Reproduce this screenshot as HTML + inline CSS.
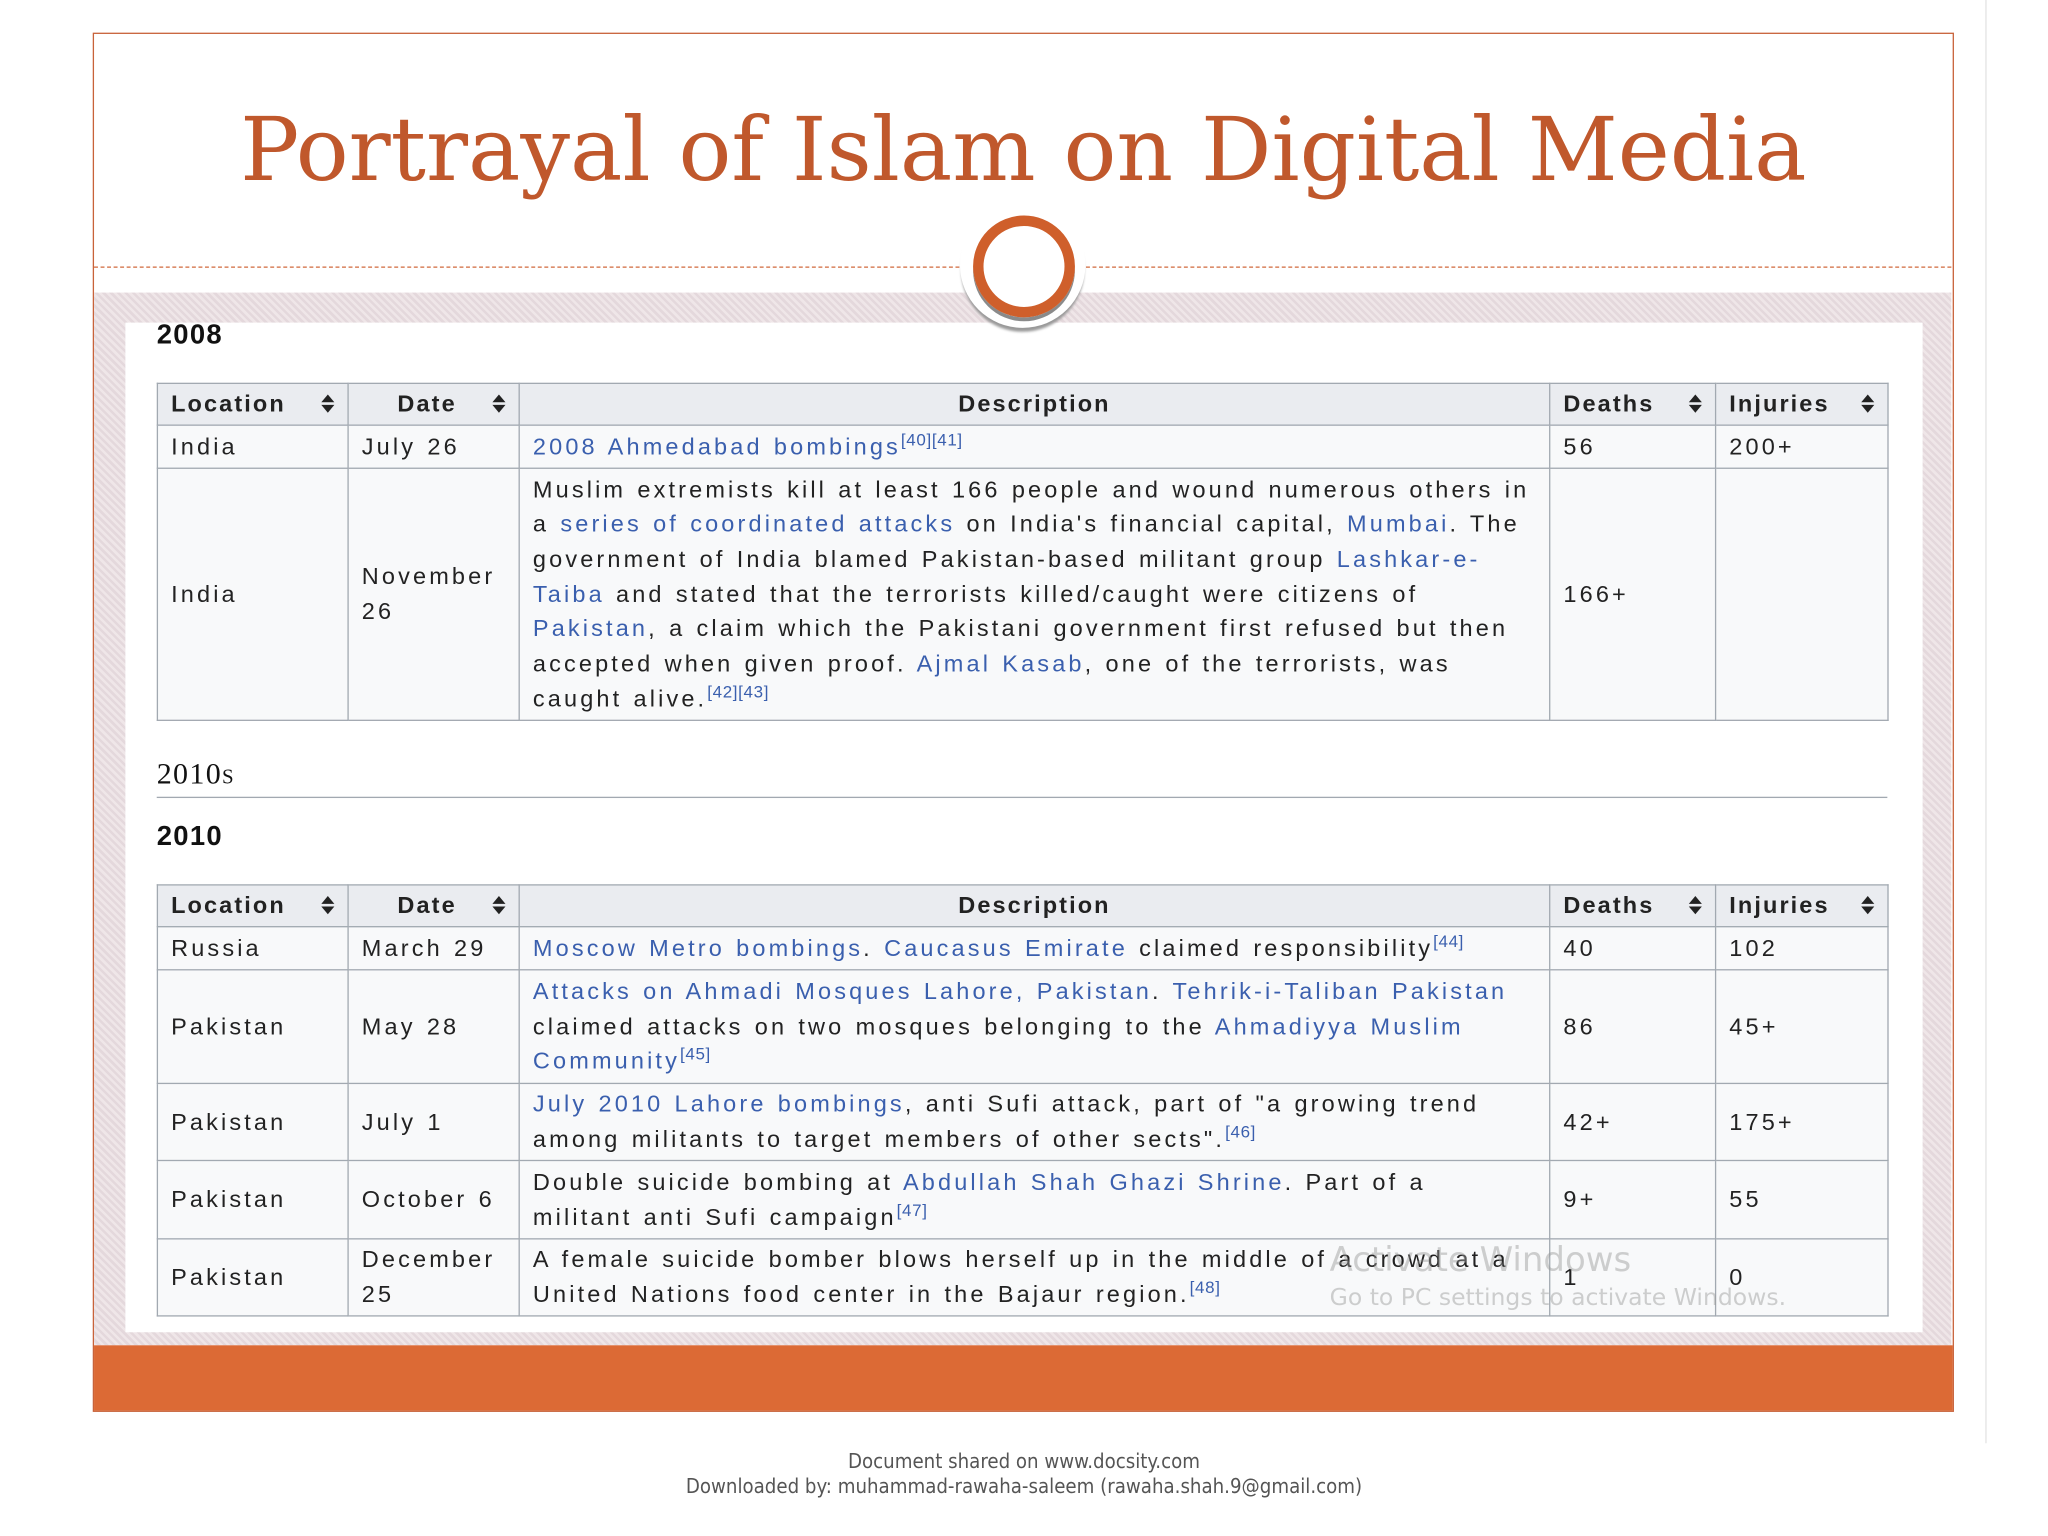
<!DOCTYPE html>
<html><head><meta charset="utf-8"><style>
html,body{margin:0;padding:0;background:#fff;width:2048px;height:1536px;overflow:hidden}
#w{position:absolute;left:0;top:0;width:1568px;height:1176px;transform:scale(1.30612);transform-origin:0 0}
.abs{position:absolute}
.frame{left:71px;top:25px;width:1423px;height:1054px;border:1px solid #c8623a}
.title{left:71px;width:1425px;top:76px;text-align:center;font-family:"DejaVu Serif","Liberation Serif",serif;font-size:67.3px;color:#c0582c}
.dash{left:72px;top:204px;width:1422px;border-top:1.5px dashed #d0683c}
.tex{left:72px;top:224px;width:1422px;height:806px;background:repeating-linear-gradient(45deg,#efe6e8 0 2px,#e4d8dc 2px 4px)}
.panel{left:96px;top:247px;width:1376px;height:773px;background:#fff}
.bar{left:72px;top:1030px;width:1423px;height:50px;background:#dc6a35}
table{position:absolute;left:120px;border-collapse:collapse;table-layout:fixed;font-family:"Liberation Sans",sans-serif;font-size:18px;color:#222;letter-spacing:2.4px;word-spacing:1.2px}
td,th{border:1px solid #a2a9b1;background:#f8f9fa;padding:0 10px;vertical-align:middle;line-height:26.7px}
th{background:#eaecf0;font-weight:bold;height:31px;letter-spacing:1.6px}
.s{float:right;display:inline-block;width:10px;height:14px;position:relative;top:6px}
.s:before,.s:after{content:"";position:absolute;left:0;border-left:5px solid transparent;border-right:5px solid transparent}
.s:before{top:0;border-bottom:6px solid #222}
.s:after{top:8px;border-top:6px solid #222}
a{color:#3a5fae;text-decoration:none}
sup{font-size:13px;line-height:0;color:#3a5fae;letter-spacing:0.5px}
.h{font-family:"Liberation Sans",sans-serif;font-weight:bold;font-size:21px;color:#111;letter-spacing:1px}
.foot{left:0;width:1568px;text-align:center;font-family:"DejaVu Sans Condensed","DejaVu Sans",sans-serif;font-size:15.5px;color:#555}
</style></head><body><div id="w">
<div class="abs" style="left:1520px;top:0;width:1px;height:1105px;background:#e4e4e4"></div>
<div class="abs frame"></div>
<div class="abs tex"></div>
<div class="abs panel"></div>
<div class="abs bar"></div>
<div class="abs title">Portrayal of Islam on Digital Media</div>
<div class="abs dash"></div>
<div class="abs" style="left:735px;top:155px;width:96px;height:96px;border-radius:50%;background:#fff;box-shadow:0 4px 2px -1px #999"></div>
<div class="abs" style="left:745px;top:165px;width:62px;height:62px;border-radius:50%;border:8px solid #cf5f2b;box-shadow:0 3px 0 #8a8a8a"></div>

<div class="abs h" style="left:120px;top:245px">2008</div>
<table style="top:293px">
<colgroup><col style="width:146px"><col style="width:131px"><col style="width:789px"><col style="width:127px"><col style="width:132px"></colgroup>
<tr><th style="text-align:left">Location <span class="s"></span></th><th>Date <span class="s"></span></th><th>Description</th><th style="text-align:left">Deaths <span class="s"></span></th><th style="text-align:left">Injuries <span class="s"></span></th></tr>
<tr style="height:33px"><td>India</td><td>July 26</td><td><a>2008 Ahmedabad bombings</a><sup>[40][41]</sup></td><td>56</td><td>200+</td></tr>
<tr style="height:193px"><td>India</td><td>November 26</td><td>Muslim extremists kill at least 166 people and wound numerous others in a <a>series of coordinated attacks</a> on India's financial capital, <a>Mumbai</a>. The government of India blamed Pakistan-based militant group <a>Lashkar-e-Taiba</a> and stated that the terrorists killed/caught were citizens of <a>Pakistan</a>, a claim which the Pakistani government first refused but then accepted when given proof. <a>Ajmal Kasab</a>, one of the terrorists, was<br>caught alive.<sup>[42][43]</sup></td><td>166+</td><td></td></tr>
</table>

<div class="abs" style="left:120px;top:580px;font-family:'Liberation Serif',serif;font-size:23px;color:#111;font-variant:small-caps;letter-spacing:1px">2010s</div>
<div class="abs" style="left:120px;top:610px;width:1325px;height:1px;background:#a2a9b1"></div>
<div class="abs h" style="left:120px;top:629px">2010</div>
<table style="top:677px">
<colgroup><col style="width:146px"><col style="width:131px"><col style="width:789px"><col style="width:127px"><col style="width:132px"></colgroup>
<tr><th style="text-align:left">Location <span class="s"></span></th><th>Date <span class="s"></span></th><th>Description</th><th style="text-align:left">Deaths <span class="s"></span></th><th style="text-align:left">Injuries <span class="s"></span></th></tr>
<tr style="height:33px"><td>Russia</td><td>March 29</td><td><a>Moscow Metro bombings</a>. <a>Caucasus Emirate</a> claimed responsibility<sup>[44]</sup></td><td>40</td><td>102</td></tr>
<tr style="height:87px"><td>Pakistan</td><td>May 28</td><td><a>Attacks on Ahmadi Mosques Lahore, Pakistan</a>. <a>Tehrik-i-Taliban Pakistan</a> claimed attacks on two mosques belonging to the <a>Ahmadiyya Muslim Community</a><sup>[45]</sup></td><td>86</td><td>45+</td></tr>
<tr style="height:59px"><td>Pakistan</td><td>July 1</td><td><a>July 2010 Lahore bombings</a>, anti Sufi attack, part of "a growing trend among militants to target members of other sects".<sup>[46]</sup></td><td>42+</td><td>175+</td></tr>
<tr style="height:60px"><td>Pakistan</td><td>October 6</td><td>Double suicide bombing at <a>Abdullah Shah Ghazi Shrine</a>. Part of a<br>militant anti Sufi campaign<sup>[47]</sup></td><td>9+</td><td>55</td></tr>
<tr style="height:59px"><td>Pakistan</td><td>December 25</td><td>A female suicide bomber blows herself up in the middle of a crowd at a United Nations food center in the Bajaur region.<sup>[48]</sup></td><td>1</td><td>0</td></tr>
</table>
<div class="abs" style="left:1018px;top:950px;font-family:'DejaVu Sans',sans-serif;font-size:26px;color:rgba(150,150,150,0.45)">Activate Windows</div>
<div class="abs" style="left:1018px;top:983px;font-family:'DejaVu Sans',sans-serif;font-size:18px;color:rgba(150,150,150,0.45)">Go to PC settings to activate Windows.</div>

<div class="abs foot" style="top:1110px">Document shared on www.docsity.com</div>
<div class="abs foot" style="top:1129px">Downloaded by: muhammad-rawaha-saleem (rawaha.shah.9@gmail.com)</div>
</div></body></html>
